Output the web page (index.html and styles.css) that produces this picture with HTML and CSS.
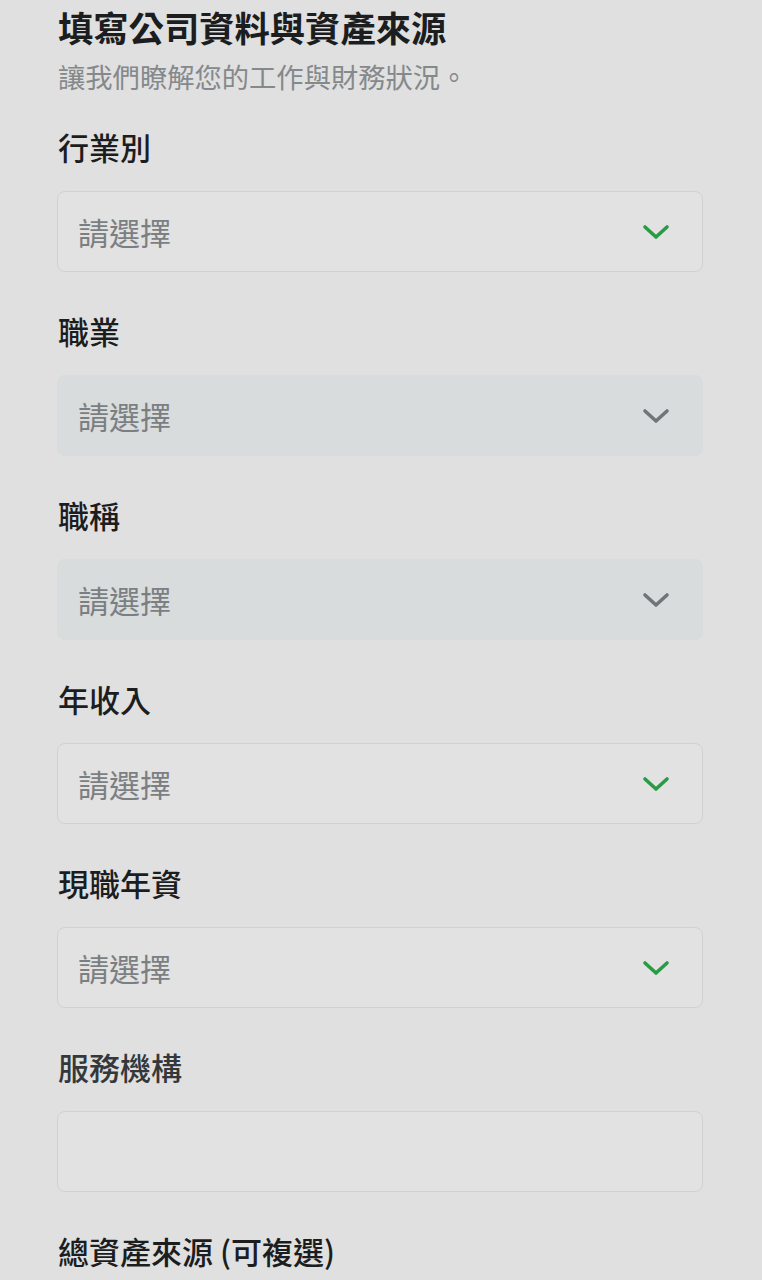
FILE: index.html
```html
<!DOCTYPE html>
<html lang="zh-Hant">

<head>
	<meta charset="UTF-8">
	<meta name="viewport" content="width=device-width, initial-scale=1.0">
	<title>填寫公司資料與資產來源</title>

	<link rel="stylesheet" href="styles.css">
</head>

<body>

	<main class="form-page">
		<header class="page-head">
			<h1 class="page-title">填寫公司資料與資產來源</h1>
			<p class="page-desc">讓我們瞭解您的工作與財務狀況。</p>
		</header>

		<div class="field">
			<label class="field-label">行業別</label>
			<div class="select">
				<span class="select-text">請選擇</span>
				<svg class="chevron" width="28" height="16" viewBox="0 0 28 16"><path d="M3 3 L14 13 L25 3" /></svg>
			</div>
		</div>

		<div class="field">
			<label class="field-label">職業</label>
			<div class="select is-disabled">
				<span class="select-text">請選擇</span>
				<svg class="chevron" width="28" height="16" viewBox="0 0 28 16"><path d="M3 3 L14 13 L25 3" /></svg>
			</div>
		</div>

		<div class="field">
			<label class="field-label">職稱</label>
			<div class="select is-disabled">
				<span class="select-text">請選擇</span>
				<svg class="chevron" width="28" height="16" viewBox="0 0 28 16"><path d="M3 3 L14 13 L25 3" /></svg>
			</div>
		</div>

		<div class="field">
			<label class="field-label">年收入</label>
			<div class="select">
				<span class="select-text">請選擇</span>
				<svg class="chevron" width="28" height="16" viewBox="0 0 28 16"><path d="M3 3 L14 13 L25 3" /></svg>
			</div>
		</div>

		<div class="field">
			<label class="field-label">現職年資</label>
			<div class="select">
				<span class="select-text">請選擇</span>
				<svg class="chevron" width="28" height="16" viewBox="0 0 28 16"><path d="M3 3 L14 13 L25 3" /></svg>
			</div>
		</div>

		<div class="field">
			<label class="field-label label-soft">服務機構</label>
			<div class="text-input"></div>
		</div>

		<div class="field">
			<label class="field-label">總資產來源 (可複選)</label>
		</div>
	</main>

</body>

</html>
```

FILE: styles.css
```css
* {
	padding: 0;
	margin: 0;
	box-sizing: border-box;
}

body {
	background-color: #e0e0e0;
	font-family: "Noto Sans CJK TC", "Noto Sans", sans-serif;
	color: #1b1d1f;
}

.form-page {
	padding: 5px 59px 0 57px;
}

/* 제목 영역 */
.page-title {
	font-size: 35.3px;
	line-height: 44px;
	font-weight: 700;
	padding-left: 1px;
}

.page-desc {
	font-size: 27.3px;
	line-height: 40px;
	color: #85898c;
	margin-top: 7px;
	padding-left: 1px;
}

.field {
	margin-top: 31px;
}

.field + .field {
	margin-top: 39px;
}

.field-label {
	display: block;
	font-size: 31px;
	line-height: 40px;
	font-weight: 500;
	padding-left: 1px;
}

.label-soft {
	color: #34383b;
}

.select,
.text-input {
	margin-top: 24px;
	height: 81px;
	border: 1.5px solid #d1d1d1;
	border-radius: 8px;
	background-color: #e2e2e2;
}

.select {
	display: flex;
	align-items: center;
	justify-content: space-between;
	padding: 0 32px 0 20px;
}

.select-text {
	font-size: 31px;
	color: #7b7f82;
}

.chevron path {
	fill: none;
	stroke: #2a9a45;
	stroke-width: 3.6;
	stroke-linecap: round;
	stroke-linejoin: round;
}

/* 선택 불가 상태 */
.is-disabled {
	border-color: #d8dcdd;
	background-color: #d8dcdd;
}

.is-disabled .chevron path {
	stroke: #6f7578;
}
```
